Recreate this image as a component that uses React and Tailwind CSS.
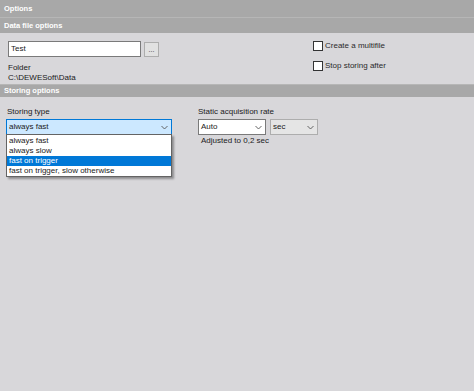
import React from "react"

const font = { fontFamily: '"Liberation Sans", Arial, sans-serif' }

function Chevron() {
    return (
        <svg width="7" height="5" viewBox="0 0 7 5" className="shrink-0">
            <polyline points="0.5,1 3.5,4 6.5,1" fill="none" stroke="#555" strokeWidth="0.9" />
        </svg>
    )
}

function Header({ children, className = "" }) {
    return (
        <div className={`flex items-center px-[4px] bg-[#a8a8a8] text-white font-bold text-[7.5px] border-t border-[#b6b6b6] ${className}`}>
            {children}
        </div>
    )
}

function Checkbox({ label }) {
    return (
        <label className="flex items-center gap-[2px] text-[8px] text-[#2a2a2a]">
            <span className="w-[10px] h-[10px] bg-white border border-[#333]" />
            {label}
        </label>
    )
}

export default function App() {
    return (
        <div style={font} className="w-[474px] h-[391px] bg-[#d8d7da] flex flex-col overflow-hidden text-[#1a1a1a]">
            <Header className="h-[17px] border-t-0">Options</Header>
            <Header className="h-[16px]">Data file options</Header>

            {/* Data file options */}
            <div className="h-[51px] flex justify-between pl-[8px] pr-[60px] pt-[8px]">
                <div className="flex flex-col">
                    <div className="flex items-center gap-[3px]">
                        <div className="w-[133px] h-[16px] bg-white border border-[#7a7a7a] flex items-center px-[2px] text-[8px]">
                            Test
                        </div>
                        <button className="w-[15px] h-[15px] bg-[#e1e1e1] border border-[#adadad] text-[7px] leading-none text-[#333] flex items-end justify-center pb-[3px]">
                            ...
                        </button>
                    </div>
                    <div className="mt-[6px] text-[8px] leading-[10px]">Folder</div>
                    <div className="text-[8px] leading-[10px]">C:\DEWESoft\Data</div>
                </div>
                <div className="flex flex-col gap-[8px] w-[101px] -mt-[1px]">
                    <Checkbox label="Create a multifile" />
                    <Checkbox label="Stop storing after" />
                </div>
            </div>

            <Header className="h-[13px]">Storing options</Header>

            {/* Storing options */}
            <div className="flex pl-[6px] pt-[10px] gap-[26px]">
                <div className="flex flex-col w-[166px]">
                    <div className="text-[8px] leading-[10px] pl-[1px]">Storing type</div>
                    <div className="relative mt-[2px]">
                        <div className="h-[16px] bg-[#cce8ff] border border-[#0078d7] flex items-center justify-between px-[2px] pr-[3px] text-[8px]">
                            always fast
                            <Chevron />
                        </div>
                        <div className="absolute left-0 top-[15px] w-[166px] bg-white border border-[#646464] shadow-[2px_2px_2px_rgba(0,0,0,0.35)] text-[8px] leading-[10px] pt-[1px]">
                            <div className="px-[2px]">always fast</div>
                            <div className="px-[2px]">always slow</div>
                            <div className="px-[2px] bg-[#0078d7] text-white">fast on trigger</div>
                            <div className="px-[2px]">fast on trigger, slow otherwise</div>
                        </div>
                    </div>
                </div>
                <div className="flex flex-col">
                    <div className="text-[8px] leading-[10px]">Static acquisition rate</div>
                    <div className="flex gap-[4px] mt-[2px]">
                        <div className="w-[68px] h-[16px] bg-white border border-[#7a7a7a] flex items-center justify-between px-[2px] pr-[3px] text-[8px]">
                            Auto
                            <Chevron />
                        </div>
                        <div className="w-[48px] h-[16px] bg-[#e5e5e5] border border-[#adadad] flex items-center justify-between px-[2px] pr-[3px] text-[8px]">
                            sec
                            <Chevron />
                        </div>
                    </div>
                    <div className="mt-[1px] pl-[3px] text-[8px] leading-[10px]">Adjusted to 0,2 sec</div>
                </div>
            </div>
        </div>
    )
}
